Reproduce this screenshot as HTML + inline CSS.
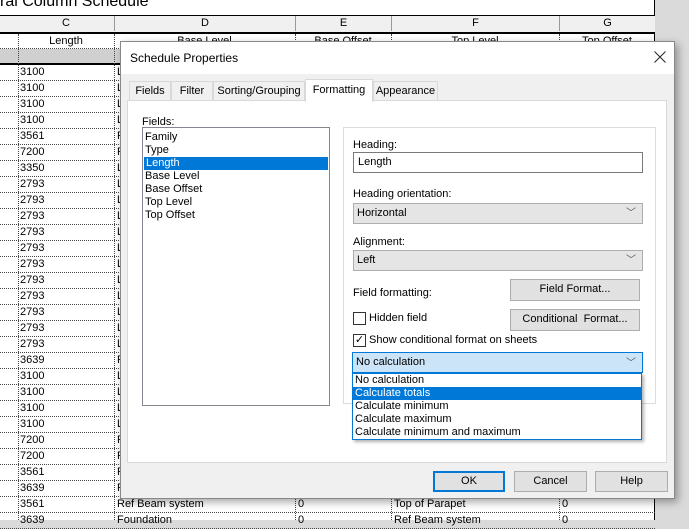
<!DOCTYPE html>
<html><head><meta charset="utf-8"><style>
*{box-sizing:border-box;margin:0;padding:0}
body{width:689px;height:520px;overflow:hidden;background:#dadada;font-family:"Liberation Sans",Arial,sans-serif;font-size:11px;color:#000;position:relative}
.a{position:absolute}
.sheet{left:0;top:0;width:655px;height:520px;background:#fff;border-right:1px solid #000}
.hdr{background:#f0f0f0;border-bottom:2px solid #000;text-align:center;font-size:11px;line-height:15px}
.row{height:16px;border-bottom:1px dotted #444;line-height:15px;position:relative}
.row i{position:absolute;left:117px;font-style:normal}
.btn{background:#e1e1e1;border:1px solid #adadad;text-align:center;line-height:19px}
.cb{width:13px;height:13px;border:1px solid #333;background:#fff}
.sel{background:#e5e5e5;border:1px solid #adadad;line-height:18px;padding-left:3px}
.chev{position:absolute;right:6px;top:1px;color:#555;font-size:10px}
</style></head><body>
<div class="a sheet">
 <div class="a" style="left:0;top:-7px;font-size:16px">ral Column Schedule</div>
 <div class="a" style="left:0;top:15px;width:655px;height:1px;background:#000"></div>
 <div class="a hdr" style="left:0;top:16px;width:655px;height:18px"></div>
 <div class="a" style="left:18px;top:16px;width:96px;text-align:center;line-height:15px">C</div>
 <div class="a" style="left:114px;top:16px;width:181px;text-align:center;line-height:15px;border-left:1px solid #999">D</div>
 <div class="a" style="left:295px;top:16px;width:96px;text-align:center;line-height:15px;border-left:1px solid #999">E</div>
 <div class="a" style="left:391px;top:16px;width:168px;text-align:center;line-height:15px;border-left:1px solid #999">F</div>
 <div class="a" style="left:559px;top:16px;width:96px;text-align:center;line-height:15px;border-left:1px solid #999">G</div>
 <div class="a" style="left:18px;top:34px;width:96px;text-align:center;line-height:14px">Length</div>
 <div class="a" style="left:114px;top:34px;width:181px;text-align:center;line-height:14px">Base Level</div>
 <div class="a" style="left:295px;top:34px;width:96px;text-align:center;line-height:14px">Base Offset</div>
 <div class="a" style="left:391px;top:34px;width:168px;text-align:center;line-height:14px">Top Level</div>
 <div class="a" style="left:559px;top:34px;width:96px;text-align:center;line-height:14px">Top Offset</div>
 <div class="a" style="left:0;top:48px;width:655px;height:1px;border-top:1px dotted #444"></div>
 <div class="a" style="left:0;top:49px;width:655px;height:16px;background:#d0d0d0;border-bottom:2px solid #000"></div>
 <div class="a" style="left:18px;top:34px;width:1px;height:486px;border-left:1px dotted #444"></div>
 <div class="a" style="left:114px;top:34px;width:1px;height:486px;border-left:1px dotted #444"></div>
 <div class="a" style="left:295px;top:34px;width:1px;height:486px;border-left:1px dotted #444"></div>
 <div class="a" style="left:391px;top:34px;width:1px;height:486px;border-left:1px dotted #444"></div>
 <div class="a" style="left:559px;top:34px;width:1px;height:486px;border-left:1px dotted #444"></div>
 <div class="a" style="left:0;top:65px;width:655px">
  <div class="row"><span style="margin-left:20px">3100</span><i>L</i></div>
  <div class="row"><span style="margin-left:20px">3100</span><i>L</i></div>
  <div class="row"><span style="margin-left:20px">3100</span><i>L</i></div>
  <div class="row"><span style="margin-left:20px">3100</span><i>L</i></div>
  <div class="row"><span style="margin-left:20px">3561</span><i>F</i></div>
  <div class="row"><span style="margin-left:20px">7200</span><i>F</i></div>
  <div class="row"><span style="margin-left:20px">3350</span><i>L</i></div>
  <div class="row"><span style="margin-left:20px">2793</span><i>L</i></div>
  <div class="row"><span style="margin-left:20px">2793</span><i>L</i></div>
  <div class="row"><span style="margin-left:20px">2793</span><i>L</i></div>
  <div class="row"><span style="margin-left:20px">2793</span><i>L</i></div>
  <div class="row"><span style="margin-left:20px">2793</span><i>L</i></div>
  <div class="row"><span style="margin-left:20px">2793</span><i>L</i></div>
  <div class="row"><span style="margin-left:20px">2793</span><i>L</i></div>
  <div class="row"><span style="margin-left:20px">2793</span><i>L</i></div>
  <div class="row"><span style="margin-left:20px">2793</span><i>L</i></div>
  <div class="row"><span style="margin-left:20px">2793</span><i>L</i></div>
  <div class="row"><span style="margin-left:20px">2793</span><i>L</i></div>
  <div class="row"><span style="margin-left:20px">3639</span><i>F</i></div>
  <div class="row"><span style="margin-left:20px">3100</span><i>L</i></div>
  <div class="row"><span style="margin-left:20px">3100</span><i>L</i></div>
  <div class="row"><span style="margin-left:20px">3100</span><i>L</i></div>
  <div class="row"><span style="margin-left:20px">3100</span><i>L</i></div>
  <div class="row"><span style="margin-left:20px">7200</span><i>F</i></div>
  <div class="row"><span style="margin-left:20px">7200</span><i>F</i></div>
  <div class="row"><span style="margin-left:20px">3561</span><i>F</i></div>
  <div class="row"><span style="margin-left:20px">3639</span><i>F</i></div>
  <div class="row"><span style="margin-left:20px">3561</span><span class="a" style="left:117px">Ref Beam system</span><span class="a" style="left:298px">0</span><span class="a" style="left:394px">Top of Parapet</span><span class="a" style="left:562px">0</span></div>
  <div class="row"><span style="margin-left:20px">3639</span><span class="a" style="left:117px">Foundation</span><span class="a" style="left:298px">0</span><span class="a" style="left:394px">Ref Beam system</span><span class="a" style="left:562px">0</span></div>
 </div>
</div>
<!-- dialog -->
<div class="a" style="left:120px;top:41px;width:555px;height:458px;background:#f0f0f0;border:1px solid #888;box-shadow:3px 3px 8px rgba(0,0,0,.35)">
 <div class="a" style="left:0;top:0;width:553px;height:32px;background:#fff"></div>
 <div class="a" style="left:9px;top:9px;font-size:12px">Schedule Properties</div>
 <svg class="a" style="left:533px;top:9px" width="12" height="12" viewBox="0 0 12 12"><path d="M0.5 0.5L11.5 11.5M11.5 0.5L0.5 11.5" stroke="#222" stroke-width="1"/></svg>
 <!-- tabs -->
 <div class="a" style="left:8px;top:39px;width:42px;height:20px;background:#f0f0f0;border:1px solid #d9d9d9;line-height:18px;text-align:center">Fields</div>
 <div class="a" style="left:50px;top:39px;width:42px;height:20px;border:1px solid #d9d9d9;line-height:18px;text-align:center">Filter</div>
 <div class="a" style="left:92px;top:39px;width:92px;height:20px;border:1px solid #d9d9d9;line-height:18px;text-align:center">Sorting/Grouping</div>
 <div class="a" style="left:252px;top:39px;width:65px;height:20px;border:1px solid #d9d9d9;line-height:18px;text-align:center">Appearance</div>
 <div class="a" style="left:6px;top:58px;width:540px;height:363px;background:#fff;border:1px solid #d9d9d9"></div>
 <div class="a" style="left:184px;top:37px;width:68px;height:23px;background:#fff;border:1px solid #d9d9d9;border-bottom:none;line-height:20px;text-align:center">Formatting</div>
 <div class="a" style="left:21px;top:74px">Fields:</div>
 <div class="a" style="left:21px;top:85px;width:188px;height:279px;background:#fff;border:1px solid #828790;line-height:13px">
  <div style="padding-left:2px;margin-top:3px">Family</div>
  <div style="padding-left:2px">Type</div>
  <div style="padding-left:2px;background:#0078d7;color:#fff;margin:0 1px">Length</div>
  <div style="padding-left:2px">Base Level</div>
  <div style="padding-left:2px">Base Offset</div>
  <div style="padding-left:2px">Top Level</div>
  <div style="padding-left:2px">Top Offset</div>
 </div>
 <div class="a" style="left:222px;top:85px;width:313px;height:277px;border:1px solid #dcdcdc"></div>
 <div class="a" style="left:232px;top:97px">Heading:</div>
 <div class="a" style="left:232px;top:110px;width:290px;height:21px;background:#fff;border:1px solid #7a7a7a;line-height:19px;padding-left:4px">Length</div>
 <div class="a" style="left:232px;top:146px">Heading orientation:</div>
 <div class="a sel" style="left:232px;top:161px;width:290px;height:21px">Horizontal<span class="chev">﹀</span></div>
 <div class="a" style="left:232px;top:194px">Alignment:</div>
 <div class="a sel" style="left:232px;top:208px;width:290px;height:21px">Left<span class="chev">﹀</span></div>
 <div class="a" style="left:232px;top:245px">Field formatting:</div>
 <div class="a btn" style="left:389px;top:237px;width:130px;height:22px">Field Format...</div>
 <div class="a cb" style="left:232px;top:270px"></div>
 <div class="a" style="left:248px;top:270px">Hidden field</div>
 <div class="a btn" style="left:389px;top:267px;width:130px;height:22px">Conditional&nbsp; Format...</div>
 <div class="a cb" style="left:232px;top:292px;font-size:11px;line-height:10px;text-align:center">✓</div>
 <div class="a" style="left:248px;top:292px">Show conditional format on sheets</div>
 <div class="a" style="left:231px;top:310px;width:291px;height:21px;background:#cce4f7;border:1px solid #0078d7;line-height:19px;padding-left:3px">No calculation<span class="chev">﹀</span></div>
 <div class="a" style="left:231px;top:331px;width:290px;height:67px;background:#fff;border:1px solid #0078d7;line-height:13px;box-shadow:2px 2px 3px rgba(0,0,0,.3)">
  <div style="padding-left:2px">No calculation</div>
  <div style="padding-left:2px;background:#0078d7;color:#fff">Calculate totals</div>
  <div style="padding-left:2px">Calculate minimum</div>
  <div style="padding-left:2px">Calculate maximum</div>
  <div style="padding-left:2px">Calculate minimum and maximum</div>
 </div>
 <div class="a btn" style="left:312px;top:429px;width:72px;height:21px;border:2px solid #0078d7;line-height:17px">OK</div>
 <div class="a btn" style="left:393px;top:429px;width:73px;height:21px">Cancel</div>
 <div class="a btn" style="left:474px;top:429px;width:73px;height:21px">Help</div>
</div>
</body></html>
